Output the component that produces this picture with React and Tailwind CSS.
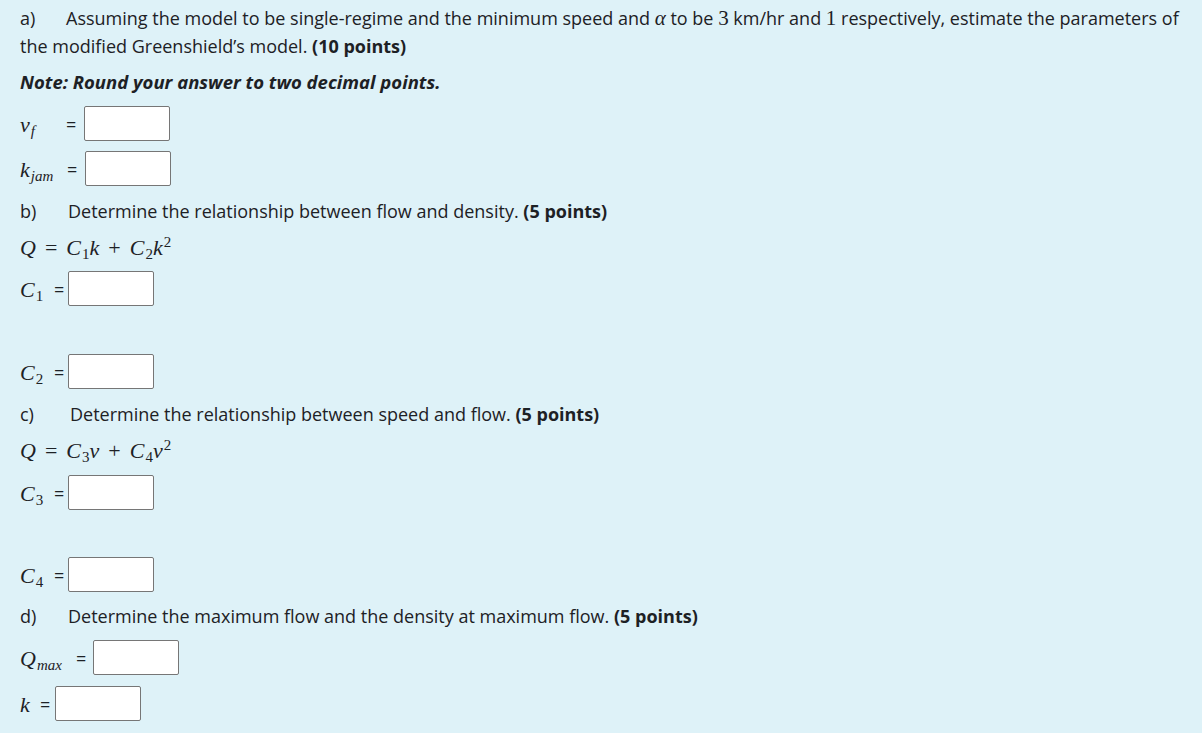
import React from 'react';

const mathFont = { fontFamily: '"Liberation Serif", "DejaVu Serif", serif' };

function V({ children, sub, subUp, sup }) {
  // italic math variable with optional subscript / superscript
  return (
    <span className="inline-flex items-baseline" style={mathFont}>
      <span className="italic">{children}</span>
      {sub && <span className="italic text-[15px] relative top-[4px] ml-[1px]">{sub}</span>}
      {subUp && <span className="text-[15px] relative top-[4px] ml-[1px]">{subUp}</span>}
      {sup && <span className="text-[15px] relative -top-[8px] ml-[1px]">{sup}</span>}
    </span>
  );
}

function Box() {
  return <div className="w-[86px] h-[35px] bg-white border border-[#767676] rounded-[2px]"></div>;
}

function Row({ label, labelW, eqW, mt }) {
  return (
    <div className={`flex items-center h-[35px] ${mt}`}>
      <div className={`${labelW} text-[22px] leading-none`}>{label}</div>
      <div className={`${eqW} text-[18px] leading-none`}>=</div>
      <Box />
    </div>
  );
}

function Heading({ letter, indent, children, mt }) {
  return (
    <div className={`flex whitespace-nowrap h-[28px] leading-[28px] ${mt}`}>
      <span className={indent}>{letter}</span>
      <span>{children}</span>
    </div>
  );
}

function Equation({ a, b, v }) {
  return (
    <div className="mt-[9px] h-[28px] leading-[28px] text-[22px] flex items-baseline gap-[9px]" style={mathFont}>
      <V>Q</V>
      <span>=</span>
      <span className="flex items-baseline">
        <V subUp={a}>C</V>
        <V>{v}</V>
      </span>
      <span>+</span>
      <span className="flex items-baseline">
        <V subUp={b}>C</V>
        <V sup="2">{v}</V>
      </span>
    </div>
  );
}

export default function App() {
  return (
    <div
      className="w-[1202px] h-[733px] bg-[#def2f8] text-[#1d2125] text-[18px] px-[20px] pt-[4px] overflow-hidden"
      style={{ fontFamily: '"Open Sans", "Noto Sans", sans-serif' }}
    >
      {/* part a */}
      <div className="leading-[28px]">
        <div className="flex whitespace-nowrap h-[28px]">
          <span className="w-[46px]">a)</span>
          <span>
            Assuming the model to be single-regime and the minimum speed and{' '}
            <span className="italic text-[21px]" style={mathFont}>α</span> to be{' '}
            <span className="text-[21px]" style={mathFont}>3</span> km/hr and{' '}
            <span className="text-[21px]" style={mathFont}>1</span> respectively, estimate the parameters of
          </span>
        </div>
        <div className="h-[28px]">
          the modified Greenshield’s model. <b className="font-bold">(10 points)</b>
        </div>
      </div>
      <div className="h-[28px] leading-[28px] mt-[8px] text-[18.5px] font-bold italic">Note: Round your answer to two decimal points.</div>

      <Row mt="mt-[10px]" labelW="w-[46px]" eqW="w-[18px]" label={<V sub="f">v</V>} />
      <Row mt="mt-[10px]" labelW="w-[47px]" eqW="w-[18px]" label={<V sub="jam">k</V>} />

      {/* part b */}
      <Heading mt="mt-[11px]" letter="b)" indent="w-[48px]">
        Determine the relationship between flow and density. <b className="font-bold">(5 points)</b>
      </Heading>
      <Equation a="1" b="2" v="k" />
      <Row mt="mt-[9px]" labelW="w-[34px]" eqW="w-[14px]" label={<V subUp="1">C</V>} />
      <Row mt="mt-[48px]" labelW="w-[34px]" eqW="w-[14px]" label={<V subUp="2">C</V>} />

      {/* part c */}
      <Heading mt="mt-[11px]" letter="c)" indent="w-[50px]">
        Determine the relationship between speed and flow. <b className="font-bold">(5 points)</b>
      </Heading>
      <Equation a="3" b="4" v="v" />
      <Row mt="mt-[10px]" labelW="w-[34px]" eqW="w-[14px]" label={<V subUp="3">C</V>} />
      <Row mt="mt-[47px]" labelW="w-[34px]" eqW="w-[14px]" label={<V subUp="4">C</V>} />

      {/* part d */}
      <Heading mt="mt-[10px]" letter="d)" indent="w-[48px]">
        Determine the maximum flow and the density at maximum flow. <b className="font-bold">(5 points)</b>
      </Heading>
      <Row mt="mt-[10px]" labelW="w-[56px]" eqW="w-[17px]" label={<V sub="max">Q</V>} />
      <Row mt="mt-[11px]" labelW="w-[20px]" eqW="w-[15px]" label={<V>k</V>} />
    </div>
  );
}
